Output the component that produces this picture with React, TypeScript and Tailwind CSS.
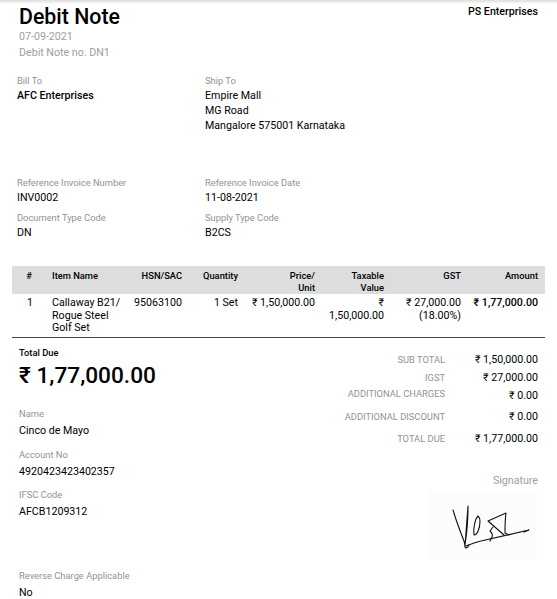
function Field({ label, value, bold }: { label: string; value: string; bold?: boolean }) {
  return (
    <div className="h-[35px]">
      <div className="text-[9.33px] leading-[14px] text-[#929292]">{label}</div>
      <div className={`text-[10.67px] leading-[15px] text-black ${bold ? "font-medium" : ""}`}>{value}</div>
    </div>
  );
}

function FooterField({ label, value }: { label: string; value: string }) {
  return (
    <div className="h-[40.5px]">
      <div className="text-[9.33px] leading-[14px] text-[#929292]">{label}</div>
      <div className="text-[10.67px] leading-[14px] mt-[3px] text-black">{value}</div>
    </div>
  );
}

function Total({ label, value, h, raised }: { label: string; value: string; h: string; raised?: boolean }) {
  return (
    <div className={`flex items-center justify-end ${h}`}>
      <span className={`text-[9.33px] text-[#929292] ${raised ? "-translate-y-[2px]" : ""}`}>{label}</span>
      <span className="w-[93px] text-right text-[10.67px] text-black">{value}</span>
    </div>
  );
}

function Signature() {
  return (
    <svg viewBox="0 0 108 68" className="w-[108px] h-[68px] bg-[#fcfcfc]" fill="none" stroke="#111" strokeWidth="1.1" strokeLinecap="round" strokeLinejoin="round">
      <path d="M24 19 C27 29 31 40 35 50 L36 55 C37 42 38 28 39 15 C39 28 38 42 36 53 C35 58 38 58 40 54" />
      <path d="M49 25 C46 28 44 38 45 44 C48 44 51 38 51 30 C51 28 50 26 49 25" />
      <path d="M37 55 C42 53 47 51 52 50 L100 39 L95 41" />
      <path d="M77 22 L59 30 L75 44 M77 22 C76 29 76 36 76 42 L80 44" />
      <path d="M64 36 L61 40 C63 42 64 44 63 46 L61 50" />
    </svg>
  );
}

const tableCols = "grid grid-cols-[36px_74px_60px_56px_77px_69px_77px_84px]";

export default function App() {
  return (
    <div className="w-[557px] h-[599px] overflow-hidden font-['Roboto',sans-serif] bg-gradient-to-b from-[#dcdcdc] to-white to-[4px]">
      {/* Header */}
      <div className="flex justify-between pl-[19px] pr-[19px] pt-[5px]">
        <div>
          <div className="text-[21.33px] leading-[24px] font-medium text-black">Debit Note</div>
          <div className="text-[10.67px] leading-[16px] text-[#9e9e9e]">07-09-2021</div>
          <div className="text-[10.67px] leading-[16px] text-[#9e9e9e]">Debit Note no. DN1</div>
        </div>
        <div className="text-[10.67px] leading-[13px] font-medium text-black">PS Enterprises</div>
      </div>

      {/* Addresses */}
      <div className="flex pl-[17px] pt-[13px] h-[115px]">
        <div className="w-[188px]">
          <div className="text-[9.33px] leading-[14px] text-[#929292]">Bill To</div>
          <div className="text-[10.67px] leading-[15px] font-medium text-black">AFC Enterprises</div>
        </div>
        <div>
          <div className="text-[9.33px] leading-[14px] text-[#929292]">Ship To</div>
          <div className="text-[10.67px] leading-[15px] text-black">Empire Mall</div>
          <div className="text-[10.67px] leading-[15px] text-black">MG Road</div>
          <div className="text-[10.67px] leading-[15px] text-black">Mangalore 575001 Karnataka</div>
        </div>
      </div>

      {/* Invoice refs */}
      <div className="grid grid-cols-[188px_1fr] content-start pl-[17px] h-[90px]">
        <Field label="Reference Invoice Number" value="INV0002" />
        <Field label="Reference Invoice Date" value="11-08-2021" />
        <Field label="Document Type Code" value="DN" />
        <Field label="Supply Type Code" value="B2CS" />
      </div>

      {/* Items table */}
      <div className="mx-[12px] w-[533px]">
        <div className={`${tableCols} h-[28px] bg-[#dddddd] pt-[4px] text-[9.33px] leading-[11.5px] font-medium text-black`}>
          <div className="text-center pr-[2px]">#</div>
          <div className="pl-[4px]">Item Name</div>
          <div className="text-right">HSN/SAC</div>
          <div className="text-right">Quantity</div>
          <div className="text-right">Price/<br />Unit</div>
          <div className="text-right">Taxable<br />Value</div>
          <div className="text-right">GST</div>
          <div className="text-right pr-[7px]">Amount</div>
        </div>
        <div className={`${tableCols} h-[44px] pt-[3px] border-b border-[#444] text-[10.67px] leading-[12.5px] text-black`}>
          <div className="text-center">1</div>
          <div className="pl-[4px]">Callaway B21/ Rogue Steel Golf Set</div>
          <div className="text-right">95063100</div>
          <div className="text-right">1 Set</div>
          <div className="text-right whitespace-nowrap">₹ 1,50,000.00</div>
          <div className="text-right">₹<br />1,50,000.00</div>
          <div className="text-right">₹ 27,000.00<br />(18.00%)</div>
          <div className="text-right pr-[7px] whitespace-nowrap font-medium">₹ 1,77,000.00</div>
        </div>
      </div>

      {/* Footer */}
      <div className="flex justify-between pl-[19px] pr-[19px] pt-[8px]">
        <div className="w-[200px]">
          <div className="text-[9.33px] leading-[13px] font-medium text-black">Total Due</div>
          <div className="text-[22.67px] leading-[28px] mt-[3px] font-medium text-black">₹ 1,77,000.00</div>
          <div className="mt-[17px]">
            <FooterField label="Name" value="Cinco de Mayo" />
            <FooterField label="Account No" value="4920423423402357" />
            <FooterField label="IFSC Code" value="AFCB1209312" />
          </div>
          <div className="mt-[40px]">
            <FooterField label="Reverse Charge Applicable" value="No" />
          </div>
        </div>
        <div className="w-[220px] flex flex-col">
          <div className="pt-[5px]">
            <Total label="SUB TOTAL" value="₹ 1,50,000.00" h="h-[18px]" />
            <Total label="IGST" value="₹ 27,000.00" h="h-[18px]" />
            <Total label="ADDITIONAL CHARGES" value="₹ 0.00" h="h-[18px]" raised />
            <Total label="ADDITIONAL DISCOUNT" value="₹ 0.00" h="h-[24px]" />
            <Total label="TOTAL DUE" value="₹ 1,77,000.00" h="h-[19px]" />
          </div>
          <div className="mt-[26px] text-right text-[10.67px] leading-[14px] text-[#9e9e9e]">Signature</div>
          <div className="flex justify-end mt-[3px] mr-[1px]">
            <Signature />
          </div>
        </div>
      </div>
    </div>
  );
}
